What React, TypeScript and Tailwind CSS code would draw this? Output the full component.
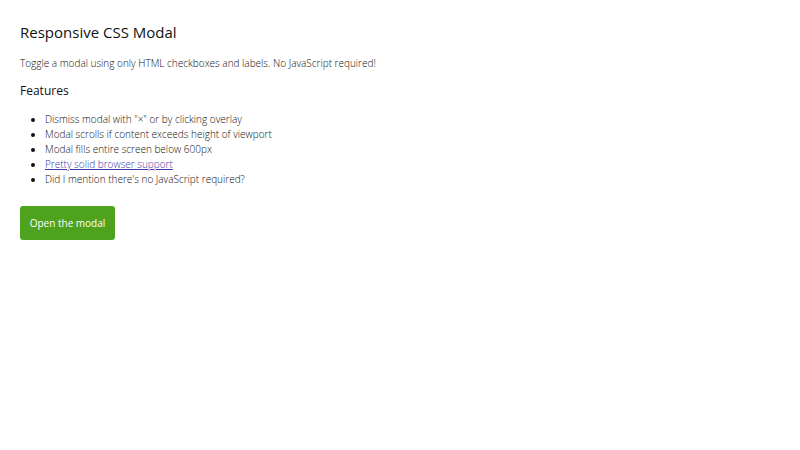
export default function App() {
  return (
    <main className="min-h-screen bg-white px-5 pt-[22px] text-[#222] font-['Open_Sans',sans-serif]">
      <h1 className="text-[15px] font-normal leading-[20px] text-[#111]">Responsive CSS Modal</h1>
      <p className="mt-[14px] text-[10px] font-light leading-[15px] text-[#111]">
        Toggle a modal using only HTML checkboxes and labels. No JavaScript required!
      </p>
      <h2 className="mt-[12px] text-[12px] font-normal leading-[16px] text-[#111]">Features</h2>
      <ul className="mt-[13px] list-disc pl-[25px] text-[10px] font-light leading-[15px] text-[#111]">
        <li>Dismiss modal with "×" or by clicking overlay</li>
        <li>Modal scrolls if content exceeds height of viewport</li>
        <li>Modal fills entire screen below 600px</li>
        <li>
          <a href="#" className="text-[#3b3aa8] underline">
            Pretty solid browser support
          </a>
        </li>
        <li>Did I mention there's no JavaScript required?</li>
      </ul>
      <button
        type="button"
        className="mt-[19px] h-[34px] w-[95px] rounded-[3px] bg-[#4fa21e] text-[10px] font-normal text-white"
      >
        Open the modal
      </button>
    </main>
  );
}
